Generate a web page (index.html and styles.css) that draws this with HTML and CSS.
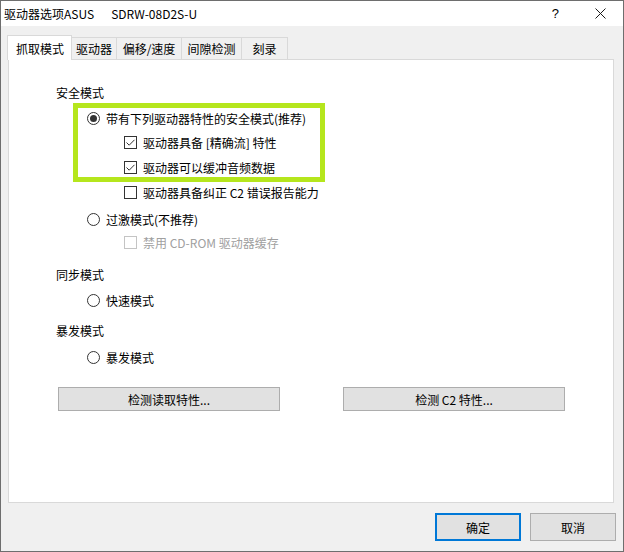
FILE: index.html
```html
<!DOCTYPE html>
<html lang="zh">
<head>
<meta charset="utf-8">
<link rel="stylesheet" href="styles.css">
</head>
<body>
<div class="window">
  <div class="titlebar">
    <span class="title">驱动器选项ASUS<span class="model">SDRW-08D2S-U</span></span>
    <span class="help">?</span>
    <span class="close"><svg width="11" height="11" viewBox="0 0 11 11"><path d="M0.5 0.5L10.5 10.5M10.5 0.5L0.5 10.5" stroke="#1a1a1a" stroke-width="1" fill="none"/></svg></span>
  </div>
  <div class="body">
    <div class="tabs">
      <div class="tab active">抓取模式</div>
      <div class="tab w45">驱动器</div>
      <div class="tab w65">偏移/速度</div>
      <div class="tab w60">间隙检测</div>
      <div class="tab w46">刻录</div>
    </div>
    <div class="panel">
      <div class="label">安全模式</div>
      <div class="highlight">
        <div class="row radio-row first"><span class="radio checked"></span><span>带有下列驱动器特性的安全模式(推荐)</span></div>
        <div class="row check-row in"><span class="check checked"><svg width="11" height="11" viewBox="0 0 11 11"><path d="M1.5 5.5L4.2 8.2L9.5 2.8" stroke="#333" stroke-width="1" fill="none"/></svg></span><span>驱动器具备 [精确流] 特性</span></div>
        <div class="row check-row in"><span class="check checked"><svg width="11" height="11" viewBox="0 0 11 11"><path d="M1.5 5.5L4.2 8.2L9.5 2.8" stroke="#333" stroke-width="1" fill="none"/></svg></span><span>驱动器可以缓冲音频数据</span></div>
      </div>
      <div class="row check-row out r-c2"><span class="check"></span><span>驱动器具备纠正 C2 错误报告能力</span></div>
      <div class="row radio-row out r-burst"><span class="radio"></span><span>过激模式(不推荐)</span></div>
      <div class="row check-row out disabled r-dis"><span class="check"></span><span>禁用 CD-ROM 驱动器缓存</span></div>
      <div class="label l-sync">同步模式</div>
      <div class="row radio-row out r-fast"><span class="radio"></span><span>快速模式</span></div>
      <div class="label l-burst">暴发模式</div>
      <div class="row radio-row out r-fast2"><span class="radio"></span><span>暴发模式</span></div>
      <div class="btn-row">
        <button class="wide-btn">检测读取特性...</button>
        <button class="wide-btn">检测 C2 特性...</button>
      </div>
    </div>
    <div class="footer">
      <button class="dlg-btn default">确定</button>
      <button class="dlg-btn">取消</button>
    </div>
  </div>
</div>
</body>
</html>
```
FILE: styles.css
```css
body {
  margin: 0;
  font-family: "Noto Sans CJK SC", "Microsoft YaHei", sans-serif;
  font-size: 12px;
  color: #000;
}
.window {
  width: 624px;
  height: 552px;
  box-sizing: border-box;
  border: 1px solid #6e6e6e;
  background: #f0f0f0;
  display: flex;
  flex-direction: column;
}
.titlebar {
  height: 25px;
  flex: none;
  background: #fff;
  display: flex;
  align-items: center;
  padding-left: 3px;
}
.title {
  flex: 1;
  font-size: 12px;
}
.model { margin-left: 17px; }
.help {
  font-family: "Liberation Sans", sans-serif;
  font-size: 13px;
  margin-right: 36px;
}
.close {
  display: flex;
  margin-right: 17px;
}
.body {
  flex: 1;
  display: flex;
  flex-direction: column;
  padding: 9px 0 0 6px;
}
.tabs {
  display: flex;
  align-items: flex-end;
  height: 24px;
  position: relative;
  z-index: 1;
}
.tab {
  height: 22px;
  box-sizing: border-box;
  border-top: 1px solid #d9d9d9;
  border-right: 1px solid #d9d9d9;
  display: flex;
  align-items: center;
  justify-content: center;
  background: #f0f0f0;
}
.tab.active {
  width: 65px;
  height: 25px;
  margin-bottom: -1px;
  background: #fff;
  border-left: 1px solid #d9d9d9;
  justify-content: flex-start;
  padding-left: 8px;
}
.w45 { width: 45px; }
.w65 { width: 65px; }
.w60 { width: 60px; }
.w46 { width: 46px; }
.panel {
  margin-left: 1px;
  width: 606px;
  height: 444px;
  box-sizing: border-box;
  border: 1px solid #d9d9d9;
  background: #fff;
  padding: 25px 0 0 47px;
  display: flex;
  flex-direction: column;
  align-items: flex-start;
}
.label {
  height: 16px;
  line-height: 16px;
}
.highlight {
  margin-top: 2px;
  margin-left: 17px;
  width: 252px;
  height: 79px;
  box-sizing: border-box;
  border: 5px solid #b5e61d;
  display: flex;
  flex-direction: column;
}
.row {
  height: 20px;
  display: flex;
  align-items: center;
  gap: 6px;
  white-space: nowrap;
}
.highlight .row { margin-top: 4.5px; }
.highlight .row.first { margin-top: 0; }
.highlight .radio-row { padding-left: 9px; }
.highlight .check-row { padding-left: 46px; }
.out.radio-row { padding-left: 31px; }
.out.check-row { padding-left: 68px; }
.r-c2 { margin-top: 0; }
.r-burst { margin-top: 7px; }
.r-dis { margin-top: 3px; }
.l-sync { margin-top: 15px; }
.r-fast { margin-top: 7px; }
.l-burst { margin-top: 13px; }
.r-fast2 { margin-top: 8px; }
.radio {
  width: 13px;
  height: 13px;
  box-sizing: border-box;
  border: 1px solid #333;
  border-radius: 50%;
  display: flex;
  align-items: center;
  justify-content: center;
  flex: none;
}
.radio.checked::after {
  content: "";
  width: 7px;
  height: 7px;
  border-radius: 50%;
  background: #333;
}
.check {
  width: 13px;
  height: 13px;
  box-sizing: border-box;
  border: 1px solid #333;
  display: flex;
  align-items: center;
  justify-content: center;
  flex: none;
}
.disabled { color: #a0a0a0; }
.disabled .check { border-color: #c4c4c4; }
.btn-row {
  margin-top: 20px;
  margin-left: 2px;
  display: flex;
  gap: 63px;
}
.wide-btn {
  width: 222px;
  height: 24px;
  box-sizing: border-box;
  border: 1px solid #adadad;
  background: #e1e1e1;
  font-family: inherit;
  font-size: 12px;
  color: #000;
  padding: 0;
}
.footer {
  display: flex;
  justify-content: flex-end;
  gap: 9px;
  padding: 10px 7px 0 0;
}
.dlg-btn {
  width: 86px;
  height: 28px;
  box-sizing: border-box;
  border: 1px solid #adadad;
  background: #e1e1e1;
  font-family: inherit;
  font-size: 12px;
  color: #000;
  padding: 0;
}
.dlg-btn.default {
  border: 2px solid #0078d7;
}
```
